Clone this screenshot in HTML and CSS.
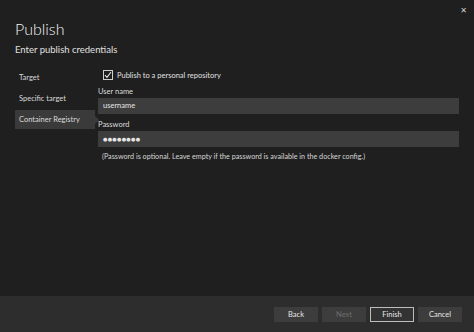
FILE: index.html
```html
<!DOCTYPE html>
<html lang="en">
<head>
  <meta charset="UTF-8">
  <title>Publish</title>
  <link rel="stylesheet" href="styles.css">
</head>
<body>
  <div class="dialog">
    <div class="close">&#x2715;</div>

    <div class="header">
      <div class="title">Publish</div>
      <div class="subtitle">Enter publish credentials</div>
    </div>

    <div class="main">
      <div class="nav">
        <div class="nav-item">Target</div>
        <div class="nav-item">Specific target</div>
        <div class="nav-item selected">Container Registry</div>
      </div>

      <div class="form">
        <label class="check-row">
          <span class="checkbox">
            <svg width="8" height="8" viewBox="0 0 8 8"><path d="M1 4.2 L3 6.4 L7 1" fill="none" stroke="#e8e8e8" stroke-width="1.1"/></svg>
          </span>
          Publish to a personal repository
        </label>

        <div class="field-label">User name</div>
        <div class="input">username</div>

        <div class="field-label">Password</div>
        <div class="input dots">&#9679;&#9679;&#9679;&#9679;&#9679;&#9679;&#9679;&#9679;</div>

        <div class="hint">(Password is optional. Leave empty if the password is available in the docker config.)</div>
      </div>
    </div>

    <div class="footer">
      <button>Back</button>
      <button class="disabled">Next</button>
      <button class="primary">Finish</button>
      <button>Cancel</button>
    </div>
  </div>
</body>
</html>
```

FILE: styles.css
```css
body {
  margin: 0;
  background: #1f1f1f;
  font-family: Lato, sans-serif;
  color: #e6e6e6;
}

.dialog {
  width: 474px;
  height: 332px;
  display: flex;
  flex-direction: column;
  position: relative;
}

.close {
  position: absolute;
  top: 6px;
  right: 7px;
  font-size: 8px;
  color: #cfcfcf;
  font-family: 'DejaVu Sans', sans-serif;
}

.header {
  padding: 18px 0 0 15px;
}

.title {
  font-size: 16px;
  line-height: 22px;
  font-weight: 300;
  color: #f2f2f2;
}

.subtitle {
  font-size: 9.5px;
  margin-top: 4px;
  color: #e0e0e0;
}

.main {
  flex: 1;
  display: flex;
  padding-top: 13px;
}

.nav {
  width: 80px;
  margin-left: 15px;
}

.nav-item {
  font-size: 7.5px;
  height: 19px;
  line-height: 19px;
  padding-left: 4px;
  margin-bottom: 2px;
  color: #dadada;
  position: relative;
}

.nav-item.selected {
  background: #3a3a3a;
}

.nav-item.selected::after {
  content: "";
  position: absolute;
  right: -4px;
  top: 6px;
  border-left: 4px solid #3a3a3a;
  border-top: 4px solid transparent;
  border-bottom: 4px solid transparent;
}

.form {
  margin-left: 3px;
  width: 361px;
  padding-top: 1px;
}

.check-row {
  display: flex;
  align-items: center;
  gap: 4px;
  font-size: 7.5px;
  margin-left: 5px;
  height: 12px;
  color: #e0e0e0;
}

.checkbox {
  width: 8px;
  height: 8px;
  border: 1px solid #cfcfcf;
  display: flex;
  align-items: center;
  justify-content: center;
}

.field-label {
  font-size: 7.5px;
  margin-top: 6px;
  height: 11px;
  color: #dcdcdc;
}

.input {
  background: #3d3d3d;
  height: 16px;
  line-height: 16px;
  font-size: 7.5px;
  padding-left: 5px;
  color: #e6e6e6;
}

.input.dots {
  font-size: 5px;
  letter-spacing: 0.3px;
  font-family: 'DejaVu Sans', sans-serif;
}

.hint {
  font-size: 7.2px;
  margin-top: 5px;
  margin-left: 4px;
  color: #d6d6d6;
}

.footer {
  height: 36px;
  background: #2d2d2d;
  display: flex;
  justify-content: flex-end;
  align-items: center;
  gap: 4px;
  padding-right: 12px;
}

button {
  width: 44px;
  height: 15px;
  background: #3d3d3d;
  border: 1px solid #3d3d3d;
  color: #e6e6e6;
  font-family: Lato, sans-serif;
  font-size: 7.5px;
  padding: 0;
}

button.disabled {
  color: #6e6e6e;
}

button.primary {
  border-color: #bdbdbd;
  background: #333;
}
```
